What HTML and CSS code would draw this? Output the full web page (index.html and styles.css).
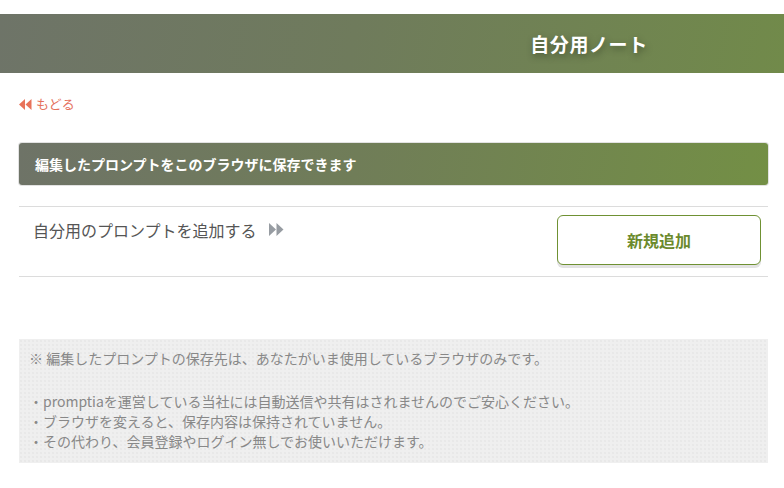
FILE: index.html
```html
<!DOCTYPE html>
<html lang="ja">
<head>
<meta charset="utf-8">
<title>自分用ノート</title>
<link rel="stylesheet" href="styles.css">
</head>
<body>
<header class="header">
  <h1 class="header-title">自分用ノート</h1>
</header>
<main class="content">
  <a class="back" href="#">
    <svg class="back-icon" width="13" height="11" viewBox="0 0 13 11"><path d="M6 0 L0 5.5 L6 11 Z M12.5 0 L6.5 5.5 L12.5 11 Z" fill="#e8735a"/></svg>
    <span>もどる</span>
  </a>
  <div class="banner">編集したプロンプトをこのブラウザに保存できます</div>
  <div class="row">
    <div class="row-label">
      <span>自分用のプロンプトを追加する</span>
      <svg class="row-icon" width="15" height="13" viewBox="0 0 15 13"><path d="M0 0 L7 6.5 L0 13 Z M7.5 0 L14.5 6.5 L7.5 13 Z" fill="#979ca2"/></svg>
    </div>
    <button class="add-btn" type="button">新規追加</button>
  </div>
  <div class="note">
    <p class="note-lead">※ 編集したプロンプトの保存先は、あなたがいま使用しているブラウザのみです。</p>
    <p>・promptiaを運営している当社には自動送信や共有はされませんのでご安心ください。</p>
    <p>・ブラウザを変えると、保存内容は保持されていません。</p>
    <p>・その代わり、会員登録やログイン無しでお使いいただけます。</p>
  </div>
</main>
</body>
</html>
```

FILE: styles.css
```css
* { box-sizing: border-box; }
html, body { margin: 0; padding: 0; background: #fff; }
body {
  font-family: "Noto Sans CJK JP", "Noto Sans", sans-serif;
  color: #555;
}
.header {
  margin-top: 14px;
  height: 59px;
  background: linear-gradient(100deg, #6e7468 0%, #6f7b5c 45%, #718a4a 100%);
  display: flex;
  align-items: center;
  justify-content: center;
  padding-left: 394px;
}
.header-title {
  margin: 0;
  font-size: 19px;
  font-weight: bold;
  color: #fff;
  letter-spacing: 0.6px;
  line-height: 1;
  text-shadow: 1px 3px 6px rgba(40, 50, 30, 0.55);
}
.content {
  margin: 0 16px 0 19px;
}
.back {
  display: inline-flex;
  align-items: center;
  gap: 4px;
  margin-top: 22px;
  color: #e5705b;
  text-decoration: none;
  font-size: 13px;
  line-height: 18px;
}
.back-icon { display: block; }
.banner {
  margin-top: 28px;
  height: 42px;
  border-radius: 3px;
  background: linear-gradient(100deg, #6e7367 0%, #707d58 45%, #738f45 100%);
  box-shadow: 0 0 0 1px #e2e2e2;
  color: #fff;
  font-weight: bold;
  font-size: 14px;
  letter-spacing: 0;
  display: flex;
  align-items: center;
  padding-left: 16px;
}
.row {
  margin-top: 21px;
  border-top: 1px solid #dcdcdc;
  border-bottom: 1px solid #dcdcdc;
  height: 71px;
  display: flex;
  justify-content: space-between;
  align-items: center;
  padding: 0 7px 0 14px;
}
.row-label {
  align-self: flex-start;
  margin-top: 12px;
  display: flex;
  align-items: center;
  gap: 12px;
  font-size: 16px;
  line-height: 22px;
  color: #555;
}
.row-icon { display: block; }
.add-btn {
  width: 204px;
  height: 50px;
  margin-top: -3px;
  background: #fff;
  border: 1px solid #6f9133;
  border-radius: 6px;
  box-shadow: 0 3px 0 #e2e2e2;
  color: #6b8a2c;
  font-family: "Noto Sans CJK JP", "Noto Sans", sans-serif;
  font-size: 16px;
  font-weight: bold;
  letter-spacing: 0;
  cursor: pointer;
}
.note {
  margin-top: 62px;
  background-color: #efefef;
  background-image: radial-gradient(circle, #e8e8e8 0.7px, transparent 1px);
  background-size: 4px 4px;
  padding: 9px 10px 12px 10px;
  font-size: 14px;
  line-height: 20px;
  color: #888;
}
.note p { margin: 0; }
.note .note-lead { margin-bottom: 23px; }
```
